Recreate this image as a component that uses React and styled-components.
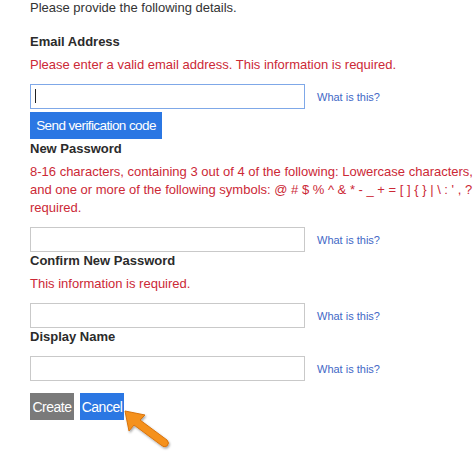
import React from "react";
import styled, { createGlobalStyle } from "styled-components";

const GlobalStyle = createGlobalStyle`
    html, body {
        margin: 0;
        padding: 0;
        background: #ffffff;
        overflow: hidden;
    }
    body {
        font-family: "Liberation Sans", Arial, Helvetica, sans-serif;
        color: #333333;
    }
`;

const Page = styled.div`
    width: 474px;
    height: 467px;
    padding-left: 30px;
    box-sizing: border-box;
    position: relative;
    overflow: hidden;
`;

const Intro = styled.p`
    margin: -1px 0 0;
    font-size: 13px;
    line-height: 18px;
    color: #333333;
`;

const Label = styled.label`
    display: block;
    margin-top: ${({ gap }) => gap || 0}px;
    font-size: 13px;
    font-weight: bold;
    line-height: 18px;
    color: #2b2b2b;
`;

const ErrorText = styled.div`
    margin-top: 5px;
    font-size: 13px;
    line-height: 18px;
    color: #cc2936;
    white-space: nowrap;
`;

const FieldRow = styled.div`
    display: flex;
    align-items: center;
    margin-top: 10px;
`;

const Input = styled.input`
    box-sizing: border-box;
    width: 275px;
    height: 25px;
    margin: 0;
    padding: 0 4px;
    font-family: inherit;
    font-size: 13px;
    border: 1px solid ${({ focused }) => (focused ? "#7fa8e8" : "#c9c9c9")};
    border-radius: 0;
    outline: none;
    background: #fff;
`;

const Caret = styled.span`
    position: absolute;
    left: 5px;
    top: 5px;
    width: 1px;
    height: 14px;
    background: #222;
`;

const InputWrap = styled.div`
    position: relative;
    display: flex;
`;

const Help = styled.a`
    margin-left: 12px;
    font-size: 11px;
    color: #3f68c6;
    text-decoration: none;
`;

const Button = styled.button`
    box-sizing: border-box;
    height: 27px;
    margin: 0;
    padding: 0 2px;
    border: none;
    border-radius: 0;
    font-family: inherit;
    font-size: 14px;
    letter-spacing: -0.5px;
    white-space: nowrap;
    color: #ffffff;
    background: ${({ variant }) => (variant === "grey" ? "#7a7a7a" : "#2b77e3")};
`;

const SendButton = styled(Button)`
    display: block;
    width: 132px;
    margin-top: 3px;
    padding: 0;
    font-size: 13.5px;
    letter-spacing: -0.6px;
`;

const Actions = styled.div`
    display: flex;
    gap: 6px;
    margin-top: 12px;
    ${Button} {
        width: 44px;
        padding: 0;
    }
`;

const Pointer = styled.svg`
    position: absolute;
    left: 118px;
    top: 405px;
    width: 56px;
    height: 46px;
    overflow: visible;
`;

function Field({ focused }) {
    return (
        <FieldRow>
            <InputWrap>
                <Input type="text" focused={focused} readOnly />
                {focused && <Caret />}
            </InputWrap>
            <Help href="#">What is this?</Help>
        </FieldRow>
    );
}

export default function App() {
    return (
        <>
            <GlobalStyle />
            <Page>
                <Intro>Please provide the following details.</Intro>

                <Label gap={16}>Email Address</Label>
                <ErrorText>Please enter a valid email address. This information is required.</ErrorText>
                <Field focused />
                <SendButton>Send verification code</SendButton>

                <Label gap={1}>New Password</Label>
                <ErrorText>
                    8-16 characters, containing 3 out of 4 of the following: Lowercase characters,
                    <br />
                    and one or more of the following symbols: @ # $ % ^ &amp; * - _ + = [ ] {"{"} {"}"} | \ : ' , ?
                    <br />
                    required.
                </ErrorText>
                <Field />

                <Label>Confirm New Password</Label>
                <ErrorText>This information is required.</ErrorText>
                <Field />

                <Label>Display Name</Label>
                <Field />

                <Actions>
                    <Button variant="grey">Create</Button>
                    <Button>Cancel</Button>
                </Actions>

                <Pointer viewBox="0 0 56 46">
                    <defs>
                        <filter id="shade" x="-30%" y="-30%" width="160%" height="160%">
                            <feDropShadow dx="1" dy="1.5" stdDeviation="1.2" floodColor="#000" floodOpacity="0.35" />
                        </filter>
                    </defs>
                    <g filter="url(#shade)">
                        <path
                            d="M7 6 L27 10 L22 15 L49 35 Q52 38 49 41 Q46 43 43 40 L16 20 L11 26 Z"
                            fill="#f5911e"
                            stroke="#d9740c"
                            strokeWidth="1"
                            strokeLinejoin="round"
                        />
                    </g>
                </Pointer>
            </Page>
        </>
    );
}
